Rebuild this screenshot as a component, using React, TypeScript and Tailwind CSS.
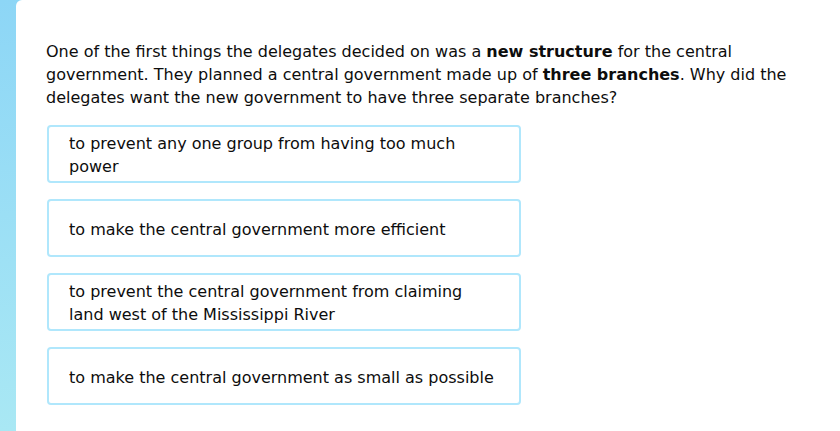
import React from 'react';

const choices = [
  'to prevent any one group from having too much power',
  'to make the central government more efficient',
  'to prevent the central government from claiming land west of the Mississippi River',
  'to make the central government as small as possible',
];

const App: React.FC = () => {
  return (
    <div
      className="flex h-[431px] w-[840px] overflow-hidden bg-gradient-to-b from-[#8dd6f6] to-[#a9e8f4] text-[#0d0d0d]"
      style={{ fontFamily: '"DejaVu Sans", Verdana, sans-serif' }}
    >
      <div className="w-4 shrink-0" />
      <div className="flex-1 rounded-tl-[6px] bg-white pl-[30px] pt-[40px]">
        <p className="w-[752px] text-[16px] leading-[23px]">
          One of the first things the delegates decided on was a <b>new structure</b> for the central
          government. They planned a central government made up of <b>three branches</b>. Why did the
          delegates want the new government to have three separate branches?
        </p>
        <div className="mt-[16px] flex w-[475px] flex-col gap-[16px] pl-px">
          {choices.map((c) => (
            <div
              key={c}
              className="flex min-h-[58px] items-center rounded-[4px] border-2 border-[#b0e7fc] px-[20px] pb-[3px] pt-[5px] text-[16px] leading-[23px]"
            >
              {c}
            </div>
          ))}
        </div>
      </div>
    </div>
  );
};

export default App;
